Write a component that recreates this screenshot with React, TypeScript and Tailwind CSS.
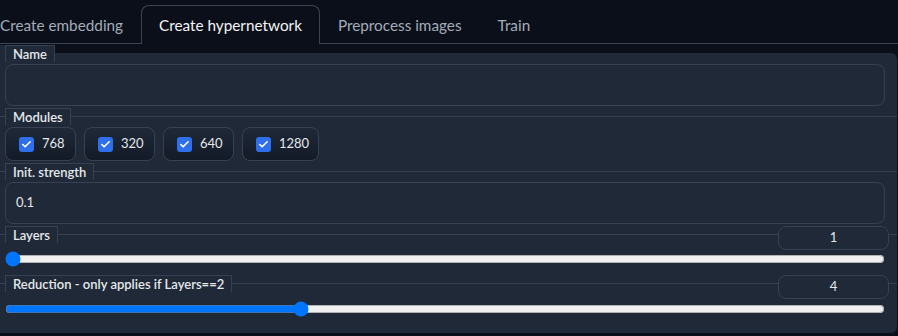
import { Check } from "lucide-react";

const font = { fontFamily: "Lato, 'Noto Sans', sans-serif" };

const tabs = ["Create embedding", "Create hypernetwork", "Preprocess images", "Train"];
const modules = ["768", "320", "640", "1280"];

function Label({ text, first }: { text: string; first?: boolean }) {
  return (
    <div
      className={
        "relative -mt-[9px] ml-[5px] h-[17px] w-fit border border-b-0 border-[#374151] bg-[#1f2937] px-[7px] text-[13px] leading-[16px] font-semibold text-[#e5e7eb] " +
        (first ? "shadow-[-5px_0_0_#1f2937]" : "")
      }
    >
      {text}
    </div>
  );
}

function NumberBox({ value }: { value: string }) {
  return (
    <div className="mr-[8px] flex h-[24px] w-[111px] items-center justify-center rounded-lg border border-[#374151] bg-[#1f2937] text-[13px] text-[#e5e7eb]">
      {value}
    </div>
  );
}

export default function App() {
  return (
    <div className="h-[336px] w-[898px] overflow-hidden bg-[#0b0f19]" style={font}>
      {/* tabs */}
      <div className="flex h-[44px] border-b border-[#3b4454] -ml-[18px]">
        {tabs.map((t, i) => (
          <div
            key={t}
            className={
              "mt-[5px] flex h-[39px] items-center rounded-t-lg border border-b-0 px-[17px] text-[15.3px] " +
              (i === 1
                ? "border-[#3b4454] bg-[#0b0f19] text-[#f3f4f6]"
                : "border-transparent text-[#a3acb9]")
            }
          >
            {t}
          </div>
        ))}
      </div>

      {/* panel */}
      <div className="mt-[9px] h-[280px] w-[897px] rounded-r-md bg-[#1f2937]">
        {/* Name */}
        <div className="border-t border-transparent pb-[10px]">
          <Label text="Name" first />
          <div className="mt-[2px] mr-[12px] ml-[5px] h-[42px] rounded-lg border border-[#374151] bg-[#1f2937]" />
        </div>

        {/* Modules */}
        <div className="border-t border-[#374151] pb-[10px]">
          <Label text="Modules" />
          <div className="mt-[2px] ml-[5px] flex gap-[8px]">
            {modules.map((m) => (
              <label
                key={m}
                className={
                  "flex h-[34px] items-center gap-[8px] rounded-lg border border-[#374151] bg-linear-to-b from-[#1f2937] to-[#131a28] pl-[13px] text-[13px] text-[#e5e7eb] " +
                  (m.length > 3 ? "w-[77px]" : "w-[71px]")
                }
              >
                <span className="flex h-[15px] w-[15px] shrink-0 items-center justify-center rounded-[3px] bg-[#2f6fec]">
                  <Check className="h-[11px] w-[11px] text-white" strokeWidth={3.5} />
                </span>
                {m}
              </label>
            ))}
          </div>
        </div>

        {/* Init. strength */}
        <div className="border-t border-[#374151] pb-[10px]">
          <Label text="Init. strength" />
          <div className="mt-[2px] mr-[12px] ml-[5px] flex h-[42px] items-center rounded-lg border border-[#374151] bg-[#1f2937] px-[10px] text-[13px] text-[#e5e7eb]">
            0.1
          </div>
        </div>

        {/* Layers */}
        <div className="border-t border-[#374151] pb-[16px]">
          <div className="flex items-start justify-between">
            <Label text="Layers" />
            <div className="-mt-[9px]">
              <NumberBox value="1" />
            </div>
          </div>
          <input
            type="range"
            min={1}
            max={2}
            defaultValue={1}
            className="mt-[1px] mr-[12px] ml-[5px] block h-[16px] w-[880px]"
          />
        </div>

        {/* Reduction */}
        <div className="border-t border-[#374151]">
          <div className="flex items-start justify-between">
            <Label text="Reduction - only applies if Layers==2" />
            <div className="-mt-[9px]">
              <NumberBox value="4" />
            </div>
          </div>
          <input
            type="range"
            min={1}
            max={10}
            defaultValue={4}
            className="mt-[2px] mr-[12px] ml-[5px] block h-[16px] w-[880px]"
          />
        </div>
      </div>
    </div>
  );
}
